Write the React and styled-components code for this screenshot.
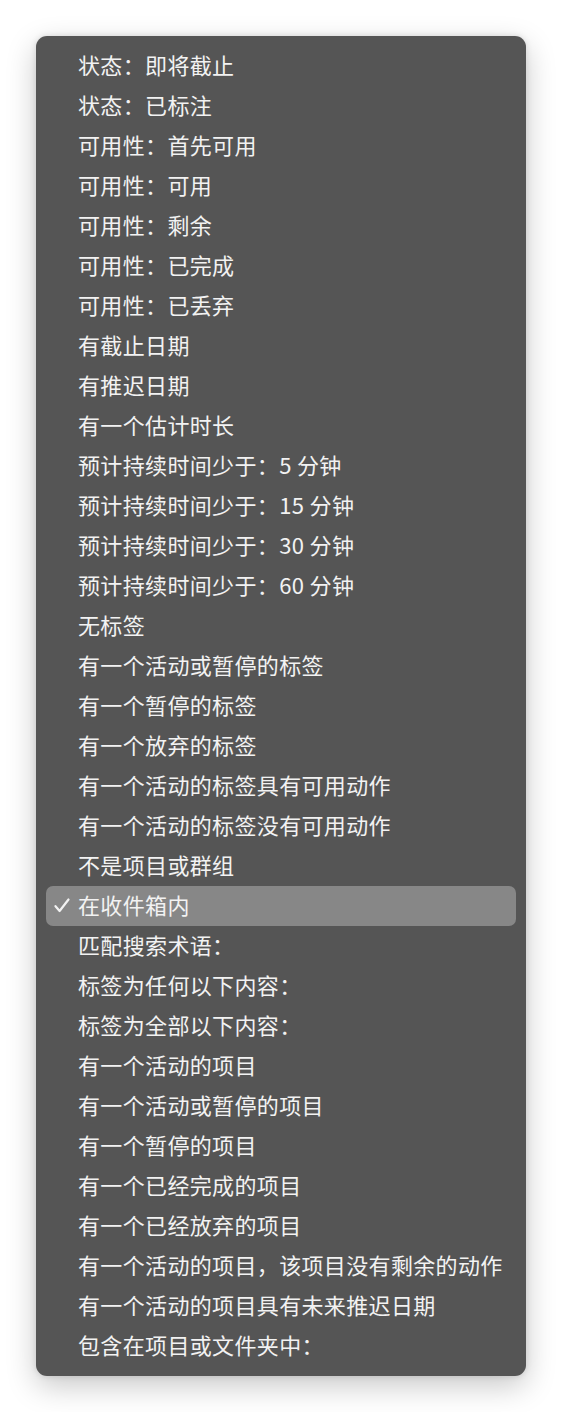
import React from "react";
import styled, { createGlobalStyle } from "styled-components";

const GlobalStyle = createGlobalStyle`
  html, body {
    margin: 0;
    padding: 0;
    background: #ffffff;
  }
  body {
    font-family: "Noto Sans CJK SC", "Noto Sans", sans-serif;
  }
`;

const Page = styled.div`
  width: 562px;
  height: 1412px;
  padding: 36px 0 0 36px;
  box-sizing: border-box;
`;

// the popup menu itself
const Menu = styled.div`
  width: 490px;
  padding: 10px 0;
  box-sizing: border-box;
  background: #555555;
  border-radius: 11px;
  box-shadow: 0 10px 30px rgba(0, 0, 0, 0.22), 0 0 6px rgba(0, 0, 0, 0.12);
  display: flex;
  flex-direction: column;
`;

const Item = styled.div`
  position: relative;
  height: 40px;
  margin: 0 10px;
  padding: 0 0 4px 32px;
  box-sizing: border-box;
  display: flex;
  align-items: center;
  border-radius: 7px;
  background: ${({ selected }) => (selected ? "#878787" : "transparent")};
  color: #f2f2f2;
  font-size: 22px;
  letter-spacing: 0.35px;
  white-space: nowrap;
`;

const Check = styled.svg`
  position: absolute;
  left: 8px;
  top: 12px;
  width: 16px;
  height: 15px;
`;

const items = [
  "状态：即将截止",
  "状态：已标注",
  "可用性：首先可用",
  "可用性：可用",
  "可用性：剩余",
  "可用性：已完成",
  "可用性：已丢弃",
  "有截止日期",
  "有推迟日期",
  "有一个估计时长",
  "预计持续时间少于：5 分钟",
  "预计持续时间少于：15 分钟",
  "预计持续时间少于：30 分钟",
  "预计持续时间少于：60 分钟",
  "无标签",
  "有一个活动或暂停的标签",
  "有一个暂停的标签",
  "有一个放弃的标签",
  "有一个活动的标签具有可用动作",
  "有一个活动的标签没有可用动作",
  "不是项目或群组",
  "在收件箱内",
  "匹配搜索术语：",
  "标签为任何以下内容：",
  "标签为全部以下内容：",
  "有一个活动的项目",
  "有一个活动或暂停的项目",
  "有一个暂停的项目",
  "有一个已经完成的项目",
  "有一个已经放弃的项目",
  "有一个活动的项目，该项目没有剩余的动作",
  "有一个活动的项目具有未来推迟日期",
  "包含在项目或文件夹中：",
];

const App = () => {
  return (
    <Page>
      <GlobalStyle />
      <Menu>
        {items.map((label) => {
          const selected = label === "在收件箱内";
          return (
            <Item key={label} selected={selected}>
              {selected && (
                <Check viewBox="0 0 16 15">
                  <path
                    d="M1.5 8.2 L5.6 13 L14.5 1.5"
                    fill="none"
                    stroke="#f2f2f2"
                    strokeWidth="2.2"
                    strokeLinecap="round"
                    strokeLinejoin="round"
                  />
                </Check>
              )}
              {label}
            </Item>
          );
        })}
      </Menu>
    </Page>
  );
};

export default App;
